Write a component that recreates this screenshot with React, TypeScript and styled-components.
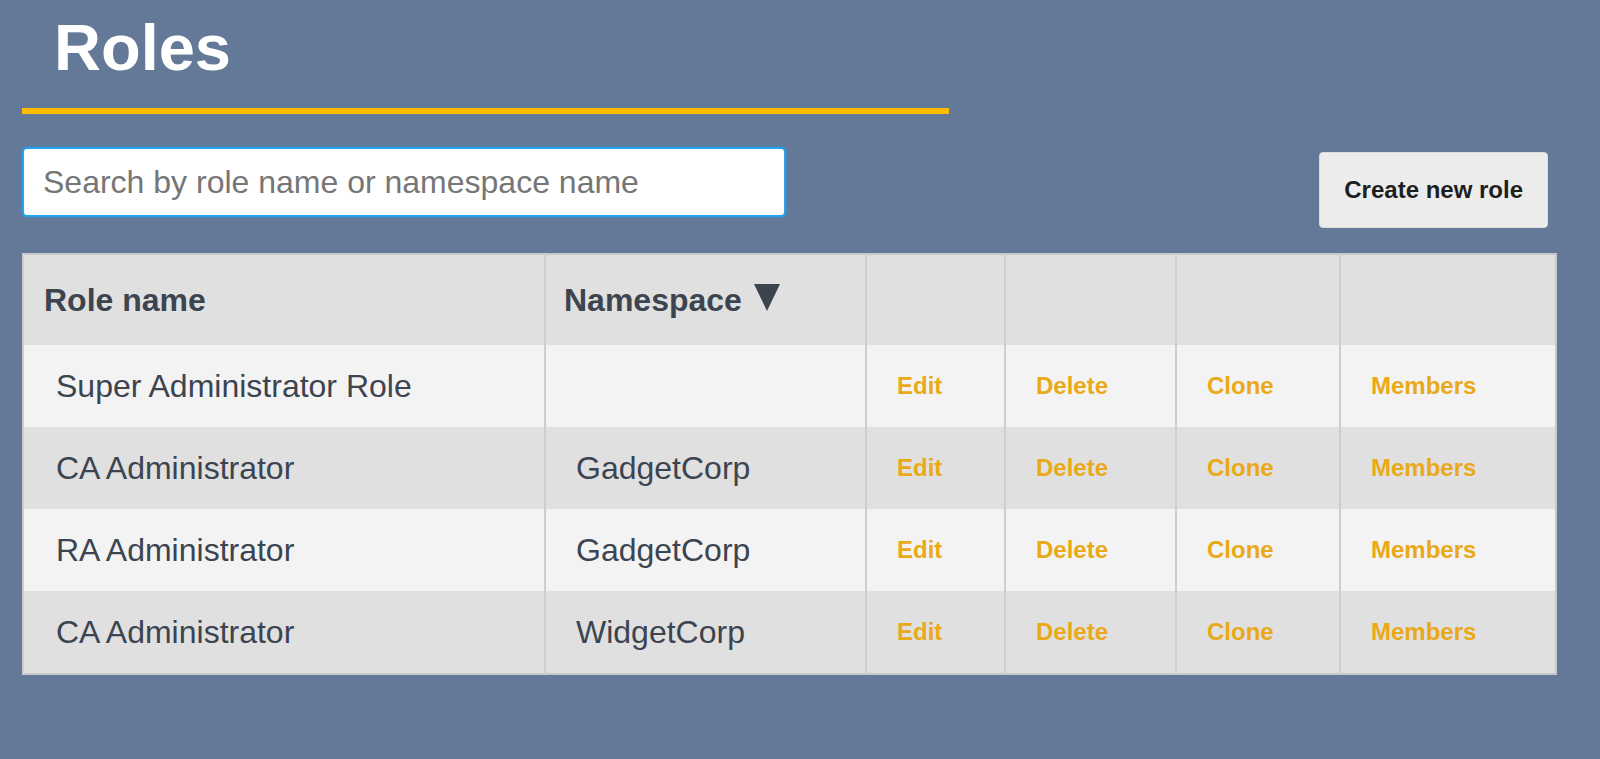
import { createGlobalStyle } from "styled-components";
import styled from "styled-components";

type Role = {
  name: string;
  namespace: string;
};

const roles: Role[] = [
  { name: "Super Administrator Role", namespace: "" },
  { name: "CA Administrator", namespace: "GadgetCorp" },
  { name: "RA Administrator", namespace: "GadgetCorp" },
  { name: "CA Administrator", namespace: "WidgetCorp" },
];

const actions = ["Edit", "Delete", "Clone", "Members"];
const columnWidths = [522, 321, 139, 171, 164, 216];

const GlobalStyle = createGlobalStyle`
  html, body {
    margin: 0;
    padding: 0;
    background: #637997;
    font-family: "Liberation Sans", Arial, Helvetica, sans-serif;
  }
`;

function App() {
  // render
  return (
    <PageStyled>
      <GlobalStyle />
      <Title>Roles</Title>
      <Rule />
      <Toolbar>
        <SearchInput
          type="text"
          placeholder="Search by role name or namespace name"
          autoFocus
        />
        <CreateButton>Create new role</CreateButton>
      </Toolbar>
      <RolesTable>
        <colgroup>
          {columnWidths.map((w, i) => (
            <col key={i} style={{ width: w }} />
          ))}
        </colgroup>
        <thead>
          <tr>
            <HeadCell>Role name</HeadCell>
            <HeadCell>
              <HeadLabel>
                Namespace
                <svg width="26" height="27" viewBox="0 0 26 27">
                  <polygon points="0,0 26,0 13,27" fill="currentColor" />
                </svg>
              </HeadLabel>
            </HeadCell>
            <HeadCell />
            <HeadCell />
            <HeadCell />
            <HeadCell />
          </tr>
        </thead>
        <tbody>
          {roles.map((role, i) => (
            <Row key={i} $odd={i % 2 === 0}>
              <Cell>{role.name}</Cell>
              <Cell>{role.namespace}</Cell>
              {actions.map((action) => (
                <Cell key={action} $action>
                  <ActionLink href="#">{action}</ActionLink>
                </Cell>
              ))}
            </Row>
          ))}
        </tbody>
      </RolesTable>
    </PageStyled>
  );
}

const PageStyled = styled.div`
  min-height: 759px;
  padding: 16px 0 0 22px;
  box-sizing: border-box;
`;

const Title = styled.h1`
  margin: 0;
  padding-left: 32px;
  font-size: 65px;
  line-height: 64px;
  font-weight: 700;
  color: #ffffff;
`;

const Rule = styled.div`
  width: 927px;
  height: 6px;
  margin-top: 28px;
  background: #ffbb00;
`;

const Toolbar = styled.div`
  width: 1526px;
  display: flex;
  justify-content: space-between;
  align-items: flex-start;
  margin-top: 33px;
`;

const SearchInput = styled.input`
  width: 764px;
  height: 70px;
  box-sizing: border-box;
  padding: 0 19px;
  border: 2px solid #21a3f3;
  border-radius: 5px;
  background: #ffffff;
  font-family: inherit;
  font-size: 32px;
  color: #333;
  outline: none;
  box-shadow: 0 0 2px rgba(33, 163, 243, 0.6);

  &::placeholder {
    color: #767676;
  }
`;

const CreateButton = styled.button`
  margin-top: 5px;
  height: 76px;
  padding: 0 24px;
  border: 1px solid #dcdcdc;
  border-radius: 4px;
  background: #ececec;
  font-family: inherit;
  font-size: 24px;
  font-weight: 700;
  color: #1e1e1e;
  cursor: pointer;
`;

const RolesTable = styled.table`
  margin-top: 25px;
  width: 1533px;
  table-layout: fixed;
  border-collapse: collapse;
  border: 2px solid #c9c9c9;
  color: #3c4450;
  font-size: 32px;
`;

const HeadCell = styled.th`
  height: 90px;
  padding: 0 0 0 18px;
  text-align: left;
  font-weight: 700;
  background: #e0e0e0;
  border-left: 2px solid #cecece;
  white-space: nowrap;

  &:first-child {
    padding-left: 20px;
  }
`;

const HeadLabel = styled.span`
  display: inline-flex;
  align-items: center;
  gap: 12px;

  svg {
    margin-top: -5px;
  }
`;

const Row = styled.tr<{ $odd: boolean }>`
  background: ${({ $odd }) => ($odd ? "#f3f3f3" : "#e0e0e0")};
`;

const Cell = styled.td<{ $action?: boolean }>`
  height: 82px;
  padding: 0 0 0 30px;
  border-left: 2px solid #cecece;
  white-space: nowrap;
  vertical-align: middle;
  font-size: ${({ $action }) => ($action ? "24px" : "32px")};

  &:first-child {
    padding-left: 32px;
  }
`;

const ActionLink = styled.a`
  font-weight: 700;
  color: #eaa917;
  text-decoration: none;
`;

export default App;
